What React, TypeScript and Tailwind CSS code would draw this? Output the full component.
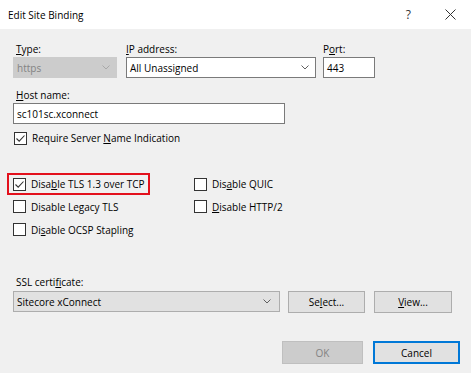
import React from "react";

// Windows 10 style "Edit Site Binding" dialog (IIS Manager)

function Chevron({ color = "#606060" }: { color?: string }) {
  return (
    <svg width="8" height="5" viewBox="0 0 8 5" className="shrink-0">
      <polyline points="0.5,0.5 4,4 7.5,0.5" fill="none" stroke={color} strokeWidth="1" />
    </svg>
  );
}

function Check({ checked, children }: { checked?: boolean; children: React.ReactNode }) {
  return (
    <div className="flex items-center h-full">
      <span className="w-[13px] h-[13px] border border-[#333333] bg-white flex items-center justify-center shrink-0">
        {checked && (
          <svg width="11" height="11" viewBox="0 0 11 11">
            <polyline points="1.5,5.5 4.2,8.2 9.5,2.5" fill="none" stroke="#333333" strokeWidth="1.1" />
          </svg>
        )}
      </span>
      <span className="ml-[5px] whitespace-nowrap">{children}</span>
    </div>
  );
}

export default function App() {
  return (
    <div className="w-[474px] h-[376px] bg-white overflow-hidden font-['Segoe_UI','Open_Sans',sans-serif] text-[10px] leading-[14px] text-black">
      <div className="w-[471px] h-[373px] flex flex-col">
        {/* title bar */}
        <div className="h-[29px] bg-white flex items-center shrink-0">
          <span className="ml-[8px] text-[10px]">Edit Site Binding</span>
          <span className="ml-auto mr-[34px] text-[12px] text-[#333]">?</span>
          <svg width="11" height="11" viewBox="0 0 11 11" className="mr-[15px]">
            <path d="M0.5 0.5 L10.5 10.5 M10.5 0.5 L0.5 10.5" stroke="#333" strokeWidth="1" />
          </svg>
        </div>

        {/* body */}
        <div className="flex-1 bg-[#f0f0f0] pl-[13px] flex flex-col">
          {/* type / ip / port */}
          <div className="mt-[13px] flex">
            <div className="w-[104px] flex flex-col">
              <span className="pl-[3px] h-[14px]">
                <u>T</u>ype:
              </span>
              <div className="mt-px h-[21px] bg-[#cccccc] border border-[#cccccc] flex items-center pl-[3px] pr-[6px] text-[#838383]">
                <span>https</span>
                <span className="ml-auto">
                  <Chevron color="#a8a8a8" />
                </span>
              </div>
            </div>
            <div className="ml-[9px] w-[190px] flex flex-col">
              <span className="h-[14px]">
                <u>I</u>P address:
              </span>
              <div className="mt-px h-[21px] bg-white border border-[#7a7a7a] flex items-center pl-[3px] pr-[6px]">
                <span>All Unassigned</span>
                <span className="ml-auto">
                  <Chevron />
                </span>
              </div>
            </div>
            <div className="ml-[7px] w-[52px] flex flex-col">
              <span className="h-[14px]">
                P<u>o</u>rt:
              </span>
              <div className="mt-px h-[21px] bg-white border border-[#7a7a7a] flex items-center pl-[3px]">
                443
              </div>
            </div>
          </div>

          {/* host name */}
          <span className="mt-[10px] pl-[3px] h-[14px]">
            <u>H</u>ost name:
          </span>
          <div className="mt-px w-[272px] h-[21px] bg-white border border-[#7a7a7a] flex items-center pl-[3px]">
            sc101sc.xconnect
          </div>

          <div className="mt-[7px] h-[14px] pl-px">
            <Check checked>
              Require Server <u>N</u>ame Indication
            </Check>
          </div>

          {/* protocol options */}
          <div className="mt-[28px] flex">
            <div className="w-[181px] flex flex-col">
              <div className="-ml-[6px] w-[143px] h-[22px] border-2 border-[#e3101c] pl-[4px]">
                <Check checked>
                  Disa<u>b</u>le TLS 1.3 over TCP
                </Check>
              </div>
              <div className="h-[23px]">
                <Check>Disable Legacy TLS</Check>
              </div>
              <div className="h-[23px]">
                <Check>
                  Di<u>s</u>able OCSP Stapling
                </Check>
              </div>
            </div>
            <div className="flex flex-col">
              <div className="h-[22px]">
                <Check>
                  Dis<u>a</u>ble QUIC
                </Check>
              </div>
              <div className="h-[23px]">
                <Check>
                  <u>D</u>isable HTTP/2
                </Check>
              </div>
            </div>
          </div>

          {/* ssl certificate */}
          <span className="mt-[34px] pl-[3px] h-[14px]">
            SSL certi<u>f</u>icate:
          </span>
          <div className="mt-[2px] flex items-start">
            <div className="w-[267px] h-[21px] bg-[#e1e1e1] border border-[#adadad] flex items-center pl-[3px] pr-[8px]">
              <span>Sitecore xConnect</span>
              <span className="ml-auto">
                <Chevron />
              </span>
            </div>
            <button className="ml-[8px] w-[77px] h-[22px] bg-[#e1e1e1] border border-[#adadad] flex items-center justify-center">
              Se<u>l</u>ect...
            </button>
            <button className="ml-[9px] w-[78px] h-[22px] bg-[#e1e1e1] border border-[#adadad] flex items-center justify-center">
              <u>V</u>iew...
            </button>
          </div>

          {/* dialog buttons */}
          <div className="mt-[28px] flex">
            <button className="ml-[269px] w-[81px] h-[23px] bg-[#cccccc] border border-[#bfbfbf] text-[#838383] flex items-center justify-center">
              OK
            </button>
            <button className="ml-[10px] w-[87px] h-[23px] bg-[#e1e1e1] border-2 border-[#0078d7] flex items-center justify-center">
              Cancel
            </button>
          </div>
        </div>
      </div>
    </div>
  );
}
